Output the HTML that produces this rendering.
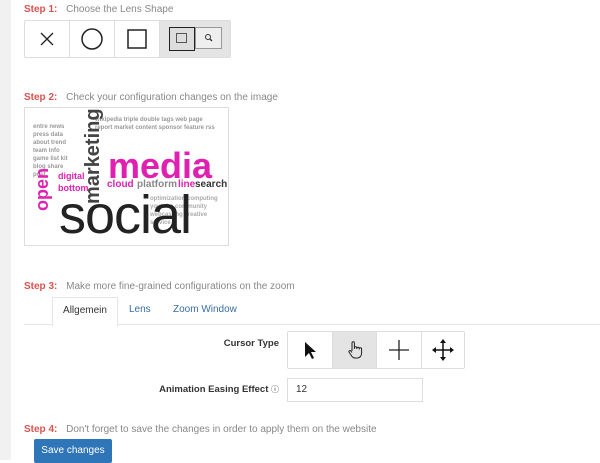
<!DOCTYPE html><html><head><style>
body{margin:0;width:600px;height:460px;overflow:hidden;background:#fff;font-family:"Liberation Sans",sans-serif;position:relative}
.side{position:absolute;left:0;top:0;width:11px;height:460px;background:#f1f1f1}
.a{position:absolute}
.st{font-size:10px;color:#888}.st b{color:#d9534f;font-weight:bold;margin-right:6px}
.box{border:1px solid #ddd;display:flex;border-radius:2px}
.box div{border-right:1px solid #ddd;display:flex;align-items:center;justify-content:center}
.box div:last-child{border-right:none}
.w{font-weight:bold;position:absolute;white-space:nowrap;line-height:1}
</style></head><body>
<div class="side"></div>
<div class="a st" style="left:24px;top:4px"><b>Step 1:</b> Choose the Lens Shape</div>
<div class="a box" style="left:24px;top:20px;height:36px;width:205px">
<div style="width:44px"><svg width="16" height="16"><path d="M2 2L14 14M14 2L2 14" stroke="#222" stroke-width="1.3"/></svg></div>
<div style="width:44px"><svg width="24" height="24"><circle cx="12" cy="12" r="10" fill="none" stroke="#222" stroke-width="1.5"/></svg></div>
<div style="width:44px"><svg width="20" height="20"><rect x="1" y="1" width="18" height="18" fill="none" stroke="#222" stroke-width="1.5"/></svg></div>
<div style="flex:1;background:#e4e4e4;position:relative">
<div style="position:absolute;left:35px;top:6px;width:25px;height:20px;border:1px solid #999;background:#eee"><svg width="25" height="20"><circle cx="12" cy="9" r="2.5" fill="none" stroke="#333"/><path d="M14 11L16 13" stroke="#333" stroke-width="1.3"/></svg></div>
<div style="position:absolute;left:9px;top:6px;width:24px;height:22px;border:1.5px solid #222;background:#ddd"></div>
<div style="position:absolute;left:16px;top:12px;width:9px;height:8px;border:1px solid #555"></div>
</div></div>
<div class="a st" style="left:24px;top:92px"><b>Step 2:</b> Check your configuration changes on the image</div>
<div class="a" style="left:24px;top:107px;width:203px;height:137px;border:1px solid #ddd;overflow:hidden;background:#fff">
<div class="w" style="left:8px;top:15px;font-size:6px;color:#999;line-height:8px;white-space:normal;width:40px">entre news press data about trend team info game list kit blog share post</div>
<div class="w" style="left:70px;top:8px;font-size:6px;color:#999;line-height:8px;white-space:normal;width:120px">wikipedia triple double tags web page report market content sponsor feature rss</div>
<div class="w" style="left:125px;top:87px;font-size:6px;color:#aaa;line-height:8px;white-space:normal;width:75px">optimization computing youtube community webcasting creative service</div>
<div class="w" style="left:34px;top:80px;font-size:54px;color:#222;font-weight:normal;letter-spacing:-1px">social</div>
<div class="w" style="left:83px;top:40px;font-size:36px;color:#e020b0">media</div>
<div class="w" style="left:58px;top:96px;font-size:20px;color:#444;transform:rotate(-90deg);transform-origin:0 0">marketing</div>
<div class="w" style="left:8px;top:103px;font-size:18px;color:#e020b0;transform:rotate(-90deg);transform-origin:0 0">open</div>
<div class="w" style="left:82px;top:72px;font-size:10px;color:#e020b0">cloud</div>
<div class="w" style="left:112px;top:72px;font-size:10px;color:#888">platform</div>
<div class="w" style="left:153px;top:72px;font-size:10px;color:#e020b0">line</div>
<div class="w" style="left:170px;top:72px;font-size:10px;color:#333">search</div>
<div class="w" style="left:33px;top:64px;font-size:9px;color:#e020b0">digital</div>
<div class="w" style="left:33px;top:76px;font-size:9px;color:#e020b0">bottom</div>
</div>
<div class="a st" style="left:24px;top:281px"><b>Step 3:</b> Make more fine-grained configurations on the zoom</div>
<div class="a" style="left:24px;top:324px;width:576px;border-top:1px solid #e5e5e5"></div>
<div class="a" style="left:52px;top:297px;width:64px;height:28px;border:1px solid #e5e5e5;border-bottom:1px solid #fff;background:#fff;font-size:10px;color:#333;text-align:center;line-height:26px">Allgemein</div>
<div class="a" style="left:129px;top:304px;font-size:10px;color:#3a6ea5">Lens</div>
<div class="a" style="left:173px;top:304px;font-size:10px;color:#3a6ea5">Zoom Window</div>
<div class="a" style="left:150px;top:338px;width:129px;text-align:right;font-size:9.5px;font-weight:bold;color:#333">Cursor Type</div>
<div class="a box" style="left:287px;top:331px;width:176px;height:36px">
<div style="width:44px"><svg width="14" height="18"><path d="M2 1L2 16L6 12L9 18L11 17L8 11L13 11Z" fill="#111"/></svg></div>
<div style="width:43px;background:#e4e4e4"><svg width="18" height="20"><path d="M6 11V3a1.2 1.2 0 012.4 0V9M8.4 8a1.2 1.2 0 012.4 0v1M10.8 8.5a1.2 1.2 0 012.4 0v1M13.2 9a1.2 1.2 0 012.4 0v4c0 3-2 5-4 5H9c-2 0-3-1-4-3L3 12c-.5-1 .8-2 1.8-1L6 12.5" fill="none" stroke="#222" stroke-width="1"/></svg></div>
<div style="width:44px"><svg width="22" height="22"><path d="M11 1V21M1 11H21" stroke="#222" stroke-width="1.3"/></svg></div>
<div style="flex:1"><svg width="22" height="22"><path d="M11 2V20M2 11H20" stroke="#111" stroke-width="1.5"/><path d="M11 0L8 4H14ZM11 22L8 18H14ZM0 11L4 8V14ZM22 11L18 8V14Z" fill="#111"/></svg></div>
</div>
<div class="a" style="left:130px;top:384px;width:149px;text-align:right;font-size:9.5px;font-weight:bold;color:#333">Animation Easing Effect <span style="font-weight:normal;font-size:8px">&#9432;</span></div>
<div class="a" style="left:287px;top:378px;width:134px;height:22px;border:1px solid #ddd;font-size:10px;color:#333;line-height:22px;text-indent:8px">12</div>
<div class="a st" style="left:24px;top:424px"><b>Step 4:</b> Don't forget to save the changes in order to apply them on the website</div>
<div class="a" style="left:34px;top:439px;width:78px;height:24px;background:#2f76b8;border-radius:2px;color:#fff;font-size:10px;text-align:center;line-height:23px">Save changes</div>
</body></html>
